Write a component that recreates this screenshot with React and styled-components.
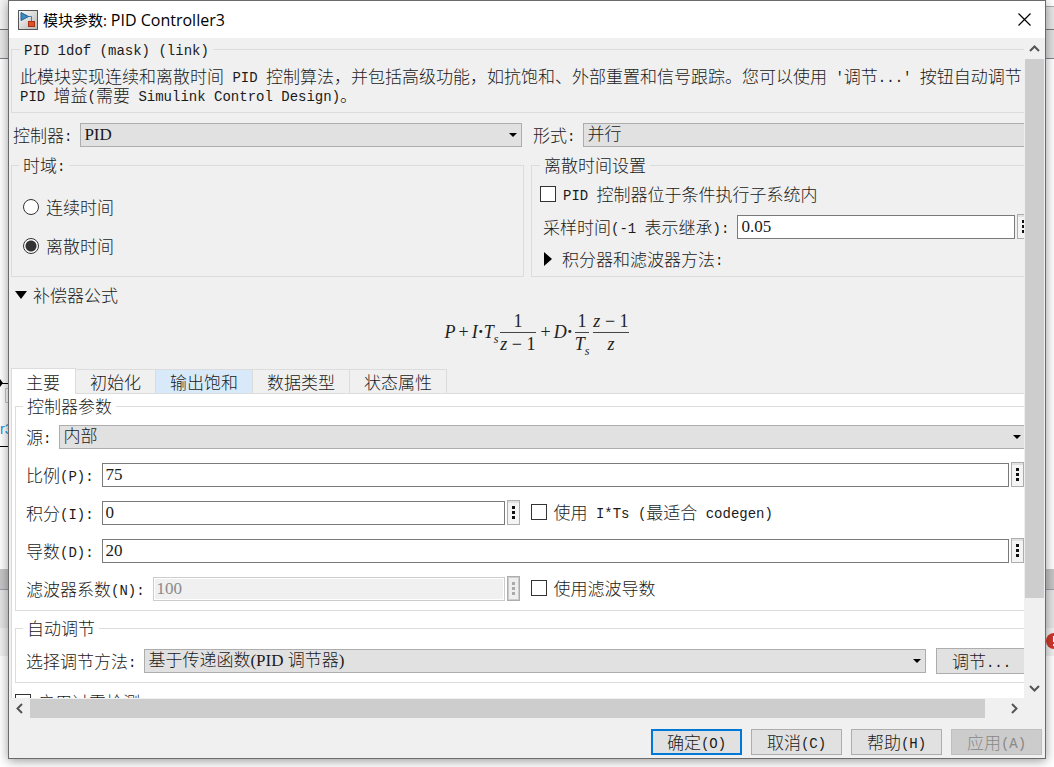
import React from 'react'
import styled, { createGlobalStyle, css } from 'styled-components';

// latin runs are set in a half width face so they line up with the chinese text
const Text = ({ children }) =>
  children.split(/([\x20-\x7e]+)/).filter(Boolean).map((part, i) =>
    /^[\x20-\x7e]/.test(part) ? <Latin key={i}>{part}</Latin> : part
  )

const Select = ({ id, label, value, options = [] }) => (
  <SelectBox>
    <select id={id} aria-label={label} defaultValue={value}>
      {[value, ...options].map((o) => <option key={o}>{o}</option>)}
    </select>
  </SelectBox>
)

const More = ({ label, disabled }) => (
  <MoreButton type="button" aria-label={label} disabled={disabled}>
    <svg width="3" height="13" viewBox="0 0 3 13" fill="currentColor">
      <rect y="0" width="3" height="3" />
      <rect y="5" width="3" height="3" />
      <rect y="10" width="3" height="3" />
    </svg>
  </MoreButton>
)

const Param = ({ id, label, value, disabled }) => (
  <Field>
    <label htmlFor={id}><Text>{label}</Text></label>
    <Input id={id} defaultValue={value} disabled={disabled} />
    <More label={`${label} 选项`} disabled={disabled} />
  </Field>
)

const Check = ({ label }) => (
  <Choice>
    <input type="checkbox" />
    <span><Text>{label}</Text></span>
  </Choice>
)

const Chevron = ({ d }) => (
  <svg width="11" height="11" viewBox="0 0 11 11" fill="none" stroke="#555" strokeWidth="2">
    <path d={d} />
  </svg>
)

const tabs = ['主要', '初始化', '输出饱和', '数据类型', '状态属性']

export default function App() {
  return (
    <Desktop lang="zh-CN">
      <GlobalStyle />
      <Side>
        <Band $h={29} $bg="#f4f4f4" $line="#777" />
        <Band $h={28} $bg="#e8e8e8" $line="#7d828c" />
        <Band $h={510} $bg="#fff" />
        <Band $h={20} $bg="#c6c6c6" $line="#999eaa" />
        <Band $h={38} $bg="#e4e4e4" />
        <Band $h={28} $bg="#f0f0f0" />
        <Canvas $top={376}>
          <svg width="8" height="74" viewBox="0 0 8 74">
            <path d="M0 3L3 7L0 11Z" fill="#000" />
            <path d="M0 7.5H8M0 70.5H8" stroke="#000" />
            <path d="M8 12.5H5.500V26.500H8" stroke="#a9cdea" fill="none" />
          </svg>
        </Canvas>
        <Canvas $top={417}><BlockName>r3</BlockName></Canvas>
      </Side>

      <Dialog>
        <TitleBar>
          <svg width="20" height="20" viewBox="0 0 20 20">
            <defs>
              <linearGradient id="iconBg" x1="0" y1="0" x2="1" y2="1">
                <stop offset="0" stopColor="#fff" />
                <stop offset="1" stopColor="#b5b5b5" />
              </linearGradient>
            </defs>
            <rect x="0.500" y="0.500" width="19" height="19" fill="url(#iconBg)" stroke="#555" />
            <path d="M10 6.500H13.500V12" stroke="#4a7fa8" fill="none" />
            <path d="M3 2.500L10.500 6.500L3 10.500Z" fill="#3b8ac4" stroke="#1f5f92" />
            <rect x="10.500" y="11.500" width="6" height="5" fill="#d9532c" stroke="#a8300f" />
          </svg>
          <h1>模块参数: <span>PID Controller3</span></h1>
          <CloseButton type="button" aria-label="关闭">
            <svg width="13" height="13" viewBox="0 0 13 13" stroke="#000" strokeWidth="1.200">
              <path d="M0.500 0.500L12.500 12.500M12.500 0.500L0.500 12.500" />
            </svg>
          </CloseButton>
        </TitleBar>

        <Body>
          <View>
            <Page>
              <Group $pad="7px 8px 8px">
                <legend><Text>PID 1dof (mask) (link)</Text></legend>
                <Description>
                  <Text>此模块实现连续和离散时间 PID 控制算法，并包括高级功能，如抗饱和、外部重置和信号跟踪。您可以使用 '调节...' 按钮自动调节</Text>
                  <br />
                  <Text>PID 增益(需要 Simulink Control Design)。</Text>
                </Description>
              </Group>

              <Columns $gap={11} $space="10px 2px 8px">
                <Field>
                  <label htmlFor="controller"><Text>控制器:</Text></label>
                  <Select id="controller" value="PID" options={['PI', 'PD', 'P', 'I']} />
                </Field>
                <Field>
                  <label htmlFor="form"><Text>形式:</Text></label>
                  <Select id="form" value="并行" options={['理想']} />
                </Field>
              </Columns>

              <Columns $gap={7}>
                <Group $pad="20px 11px 18px" $pull={4}>
                  <legend><Text>时域:</Text></legend>
                  <RadioList>
                    <Choice><input type="radio" name="domain" /><span>连续时间</span></Choice>
                    <Choice><input type="radio" name="domain" defaultChecked /><span>离散时间</span></Choice>
                  </RadioList>
                </Group>
                <Group $pad="7px 8px 3px">
                  <legend>离散时间设置</legend>
                  <Stack $gap={8}>
                    <Check label="PID 控制器位于条件执行子系统内" />
                    <SampleTime>
                      <Param id="sample" label="采样时间(-1 表示继承):" value="0.05" />
                    </SampleTime>
                    <Toggle type="button">
                      <svg width="8" height="14" viewBox="0 0 8 14"><path d="M0 0L8 7L0 14Z" /></svg>
                      <span><Text>积分器和滤波器方法:</Text></span>
                    </Toggle>
                  </Stack>
                </Group>
              </Columns>

              <Toggle type="button" $top={6}>
                <svg width="12" height="8" viewBox="0 0 12 8"><path d="M0 0H12L6 8Z" /></svg>
                <span>补偿器公式</span>
              </Toggle>

              <Formula>
                <i>P</i><Op>+</Op><i>I</i><b>·</b><i>T<sub>s</sub></i>
                <Fraction><span>1</span><span><i>z</i> − 1</span></Fraction>
                <Op>+</Op><i>D</i><b>·</b>
                <Fraction><span>1</span><span><i>T<sub>s</sub></i></span></Fraction>
                <Fraction><span><i>z</i> − 1</span><span><i>z</i></span></Fraction>
              </Formula>

              <Tabs role="tablist">
                {tabs.map((t, i) => (
                  <Tab key={t} type="button" role="tab" aria-selected={i === 0} $hot={i === 2}>{t}</Tab>
                ))}
              </Tabs>

              <Pane>
                <Group $pad="9px 10px" $pull={3}>
                  <legend>控制器参数</legend>
                  <Stack $gap={13}>
                    <Field>
                      <label htmlFor="source"><Text>源:</Text></label>
                      <Select id="source" value="内部" options={['外部']} />
                    </Field>
                    <Params>
                      <Param id="p" label="比例(P):" value="75" />
                      <Columns $gap={11}>
                        <Param id="i" label="积分(I):" value="0" />
                        <Check label="使用 I*Ts (最适合 codegen)" />
                      </Columns>
                      <Param id="d" label="导数(D):" value="20" />
                      <Columns $gap={11}>
                        <Param id="n" label="滤波器系数(N):" value="100" disabled />
                        <Check label="使用滤波导数" />
                      </Columns>
                    </Params>
                  </Stack>
                </Group>

                <Group $pad="10px 9px 8px 10px" $pull={3} $top={7}>
                  <legend>自动调节</legend>
                  <Field>
                    <label htmlFor="method"><Text>选择调节方法:</Text></label>
                    <Select id="method" value="基于传递函数(PID 调节器)" options={['基于频率响应']} />
                    <TuneButton type="button"><Text>调节...</Text></TuneButton>
                  </Field>
                </Group>

                <ZeroCross><Check label="启用过零检测" /></ZeroCross>
              </Pane>
            </Page>
          </View>

          <ScrollBar $vertical>
            <button type="button" aria-label="向上滚动"><Chevron d="M1 8L5.500 3.500L10 8" /></button>
            <Track><Thumb $size="87%" /></Track>
            <button type="button" aria-label="向下滚动"><Chevron d="M1 3L5.500 7.500L10 3" /></button>
          </ScrollBar>
        </Body>

        <ScrollBar>
          <button type="button" aria-label="向左滚动"><Chevron d="M8 1L3.500 5.500L8 10" /></button>
          <Track><Thumb $size="98%" /></Track>
          <button type="button" aria-label="向右滚动"><Chevron d="M3 1L7.500 5.500L3 10" /></button>
        </ScrollBar>

        <Footer>
          <Button type="button" $primary><Text>确定(O)</Text></Button>
          <Button type="button"><Text>取消(C)</Text></Button>
          <Button type="button"><Text>帮助(H)</Text></Button>
          <Button type="button" disabled><Text>应用(A)</Text></Button>
        </Footer>
      </Dialog>

      <Side>
        <Band $h={6} $bg="#fff" $line="#aaa" />
        <Band $h={22} $bg="#e6e6e6" $line="#777" />
        <Band $h={28} $bg="#e0e0e0" $line="#7d828c" />
        <Band $h={510} $bg="#fff" />
        <Band $h={20} $bg="#c6c6c6" $line="#999eaa" />
        <Band $h={38} $bg="#e4e4e4" />
        <Band $h={28} $bg="#f0f0f0" />
        <Canvas $top={633}>
          <svg width="16" height="16" viewBox="0 0 16 16">
            <circle cx="8" cy="8" r="8" fill="#cf3a2b" />
            <path d="M8 3V9M8 11V13" stroke="#fff" strokeWidth="2" />
          </svg>
        </Canvas>
      </Side>
    </Desktop>
  )
}

const GlobalStyle = createGlobalStyle`
  *{
    box-sizing: border-box;
  }

  body{
    margin: 0;
    color: #1a1a1a;
    font-family: "Noto Sans CJK SC", sans-serif;
    font-size: 17px;
    font-weight: 300;
    line-height: 20px;
  }

  button, input, select{
    margin: 0;
    color: inherit;
    font: inherit;
  }
`;

const Latin = styled.span`
  font-family: "Liberation Mono", monospace;
  font-size: 14px;
  line-height: 0;
  vertical-align: 1px;
  white-space: pre;
`;

const Desktop = styled.div`
  display: flex;
  height: 100vh;
  overflow: hidden;
  background: #fff;
`;

const Side = styled.div`
  position: relative;
  flex: 0 0 8px;
  overflow: hidden;
`;

const Band = styled.div`
  height: ${(p) => p.$h + (p.$line ? 1 : 0)}px;
  background: ${(p) => p.$bg};
  border-bottom: ${(p) => (p.$line ? `1px solid ${p.$line}` : 'none')};
`;

const Canvas = styled.div`
  position: absolute;
  top: ${(p) => p.$top}px;
  left: 0;

  svg{
    display: block;
  }
`;

const BlockName = styled.span`
  color: #1a8fe3;
  font-family: "Liberation Sans", sans-serif;
  font-size: 14px;
  line-height: 16px;
`;

const Dialog = styled.main`
  position: relative;
  z-index: 1;
  display: flex;
  flex: 1;
  flex-direction: column;
  min-width: 0;
  margin-bottom: 8px;
  border: 1px solid #6b6b6b;
  background: #f0f0f0;
  box-shadow: 0 2px 10px rgba(0, 0, 0, 0.4);
`;

const TitleBar = styled.header`
  display: flex;
  align-items: center;
  flex: 0 0 37px;
  gap: 5px;
  padding: 0 9px;
  background: #fff;

  h1{
    flex: 1;
    margin: 0;
    color: #000;
    font-family: "Open Sans", "Noto Sans CJK SC", sans-serif;
    font-size: 15px;
    font-weight: 400;
  }

  span{
    font-size: 16px;
  }
`;

const CloseButton = styled.button`
  display: flex;
  align-items: center;
  justify-content: center;
  width: 24px;
  height: 24px;
  padding: 0;
  border: none;
  background: none;
`;

const Body = styled.div`
  display: flex;
  flex: 1;
  min-height: 0;
`;

const View = styled.div`
  flex: 1;
  min-width: 0;
  margin: 0 1px 1px 0;
  overflow: hidden;
`;

const Page = styled.form`
  width: calc(100% + 22px);
  padding: 1px 2px;
`;

const Group = styled.fieldset`
  min-width: 0;
  margin: ${(p) => p.$top || 0}px 0 0;
  padding: ${(p) => p.$pad};
  border: 1px solid #dcdcdc;

  legend{
    margin-left: -${(p) => p.$pull || 0}px;
    padding: 0 4px;
  }
`;

const Description = styled.p`
  margin: 0;
  line-height: 19px;
  white-space: nowrap;
`;

const Columns = styled.div`
  display: grid;
  grid-template-columns: 1fr 1fr;
  gap: ${(p) => p.$gap}px;
  padding: ${(p) => p.$space || 0};
`;

const Stack = styled.div`
  display: flex;
  flex-direction: column;
  gap: ${(p) => p.$gap}px;
`;

const Params = styled(Stack)`
  gap: 13px;
  padding-right: 2px;
`;

const RadioList = styled(Stack)`
  gap: 15px;
`;

const SampleTime = styled.div`
  padding: 0 5px 0 3px;
`;

const Field = styled.div`
  display: flex;
  align-items: center;
  min-width: 0;

  label{
    margin-right: 8px;
    white-space: nowrap;
  }
`;

const SelectBox = styled.div`
  position: relative;
  flex: 1;
  min-width: 0;

  select{
    display: block;
    width: 100%;
    height: 24px;
    padding: 0 24px 0 3px;
    border: 1px solid #adadad;
    border-radius: 0;
    outline: none;
    background: #e1e1e1;
    font-family: "Liberation Serif", "Noto Sans CJK SC", serif;
    line-height: 20px;
    appearance: none;
  }

  &::after{
    content: '';
    position: absolute;
    top: 10px;
    right: 5px;
    width: 8px;
    height: 4px;
    background: #000;
    clip-path: polygon(0 0, 100% 0, 50% 100%);
    pointer-events: none;
  }
`;

const Input = styled.input`
  flex: 1;
  min-width: 0;
  height: 24px;
  padding: 0 3px;
  border: 1px solid #7a7a7a;
  border-radius: 0;
  outline: none;
  background: #fff;
  font-family: "Liberation Serif", serif;

  &:disabled{
    border-color: #ccc;
    background: #f0f0f0;
    box-shadow: inset 0 0 0 1px #fff;
    color: #8a8a8a;
  }
`;

const MoreButton = styled.button`
  display: flex;
  align-items: center;
  justify-content: center;
  flex: 0 0 13px;
  height: 25px;
  margin-left: 2px;
  padding: 0;
  border: 1px solid #adadad;
  background: #f4f4f4;
  box-shadow: inset 0 2px #e1e1e1;
  color: #111;

  &:disabled{
    background: #eee;
    box-shadow: inset 0 0 0 1px #ccc;
    color: #aaa;
  }
`;

const Choice = styled.label`
  display: flex;
  align-items: center;
  gap: 7px;
  height: 24px;
  white-space: nowrap;

  input{
    flex: none;
    width: 16px;
    height: 16px;
    border: 1px solid #333;
    background: #fff;
    appearance: none;
  }

  input[type='radio']{
    border-radius: 50%;
  }

  input[type='radio']:checked{
    background: radial-gradient(circle, #333 5px, #fff 6px);
  }
`;

const Toggle = styled.button`
  display: flex;
  align-items: center;
  gap: ${(p) => (p.$top ? 6 : 10)}px;
  height: 24px;
  margin-top: ${(p) => p.$top || 0}px;
  padding: 0 0 0 4px;
  border: none;
  background: none;
`;

const Formula = styled.div`
  display: flex;
  align-items: center;
  justify-content: center;
  height: 50px;
  margin-bottom: 11px;
  padding-left: 20px;
  color: #222;
  font-family: "Liberation Serif", serif;
  font-size: 18px;
  font-weight: 400;
  line-height: 22px;

  sub{
    font-size: 12px;
    line-height: 0;
  }
`;

const Op = styled.span`
  margin: 0 3px;
`;

const Fraction = styled.span`
  display: flex;
  flex-direction: column;
  align-items: center;
  margin: 0 2px;

  > span:first-child{
    align-self: stretch;
    border-bottom: 1px solid #444;
    text-align: center;
  }
`;

const Tabs = styled.div`
  display: flex;
  align-items: flex-end;
  height: 25px;
`;

const Tab = styled.button`
  height: 24px;
  margin: 0;
  padding: 0 14px;
  border: 1px solid #dcdcdc;
  border-width: 1px 1px 0 0;
  background: ${(p) => (p.$hot ? '#d8eaf9' : '#f0f0f0')};

  ${(p) => p['aria-selected'] && css`
    position: relative;
    height: 26px;
    margin-bottom: -1px;
    padding-right: 15px;
    border-left-width: 1px;
    background: #fff;
  `}
`;

const Pane = styled.section`
  padding: 2px 6px 20px 3px;
  border: 1px solid #dcdcdc;
  background: #fff;
`;

const button = css`
  border: 1px solid #adadad;
  background: #e1e1e1;
  line-height: 20px;
`;

const TuneButton = styled.button`
  ${button}
  width: 91px;
  height: 26px;
  margin-left: 10px;
`;

const ZeroCross = styled.div`
  padding-top: 7px;
`;

const ScrollBar = styled.div`
  display: flex;
  flex: 0 0 19px;
  flex-direction: ${(p) => (p.$vertical ? 'column' : 'row')};
  margin: ${(p) => (p.$vertical ? '0 1px 0 0' : '0 20px 0 0')};

  > button{
    display: flex;
    align-items: center;
    justify-content: center;
    flex: 0 0 21px;
    padding: 0;
    border: none;
    background: none;
  }
`;

const Track = styled.div`
  display: flex;
  flex: 1;
  flex-direction: inherit;
`;

const Thumb = styled.div`
  flex: 0 0 ${(p) => p.$size};
  background: #cdcdcd;
`;

const Footer = styled.footer`
  display: flex;
  justify-content: flex-end;
  gap: 9px;
  padding: 11px 3px 3px;
`;

const Button = styled.button`
  ${button}
  width: 91px;
  height: 26px;
  padding: 0;

  ${(p) => p.$primary && css`
    border: 2px solid #0078d7;
  `}

  &:disabled{
    border-color: #bfbfbf;
    background: #ccc;
    color: #888;
  }
`;
